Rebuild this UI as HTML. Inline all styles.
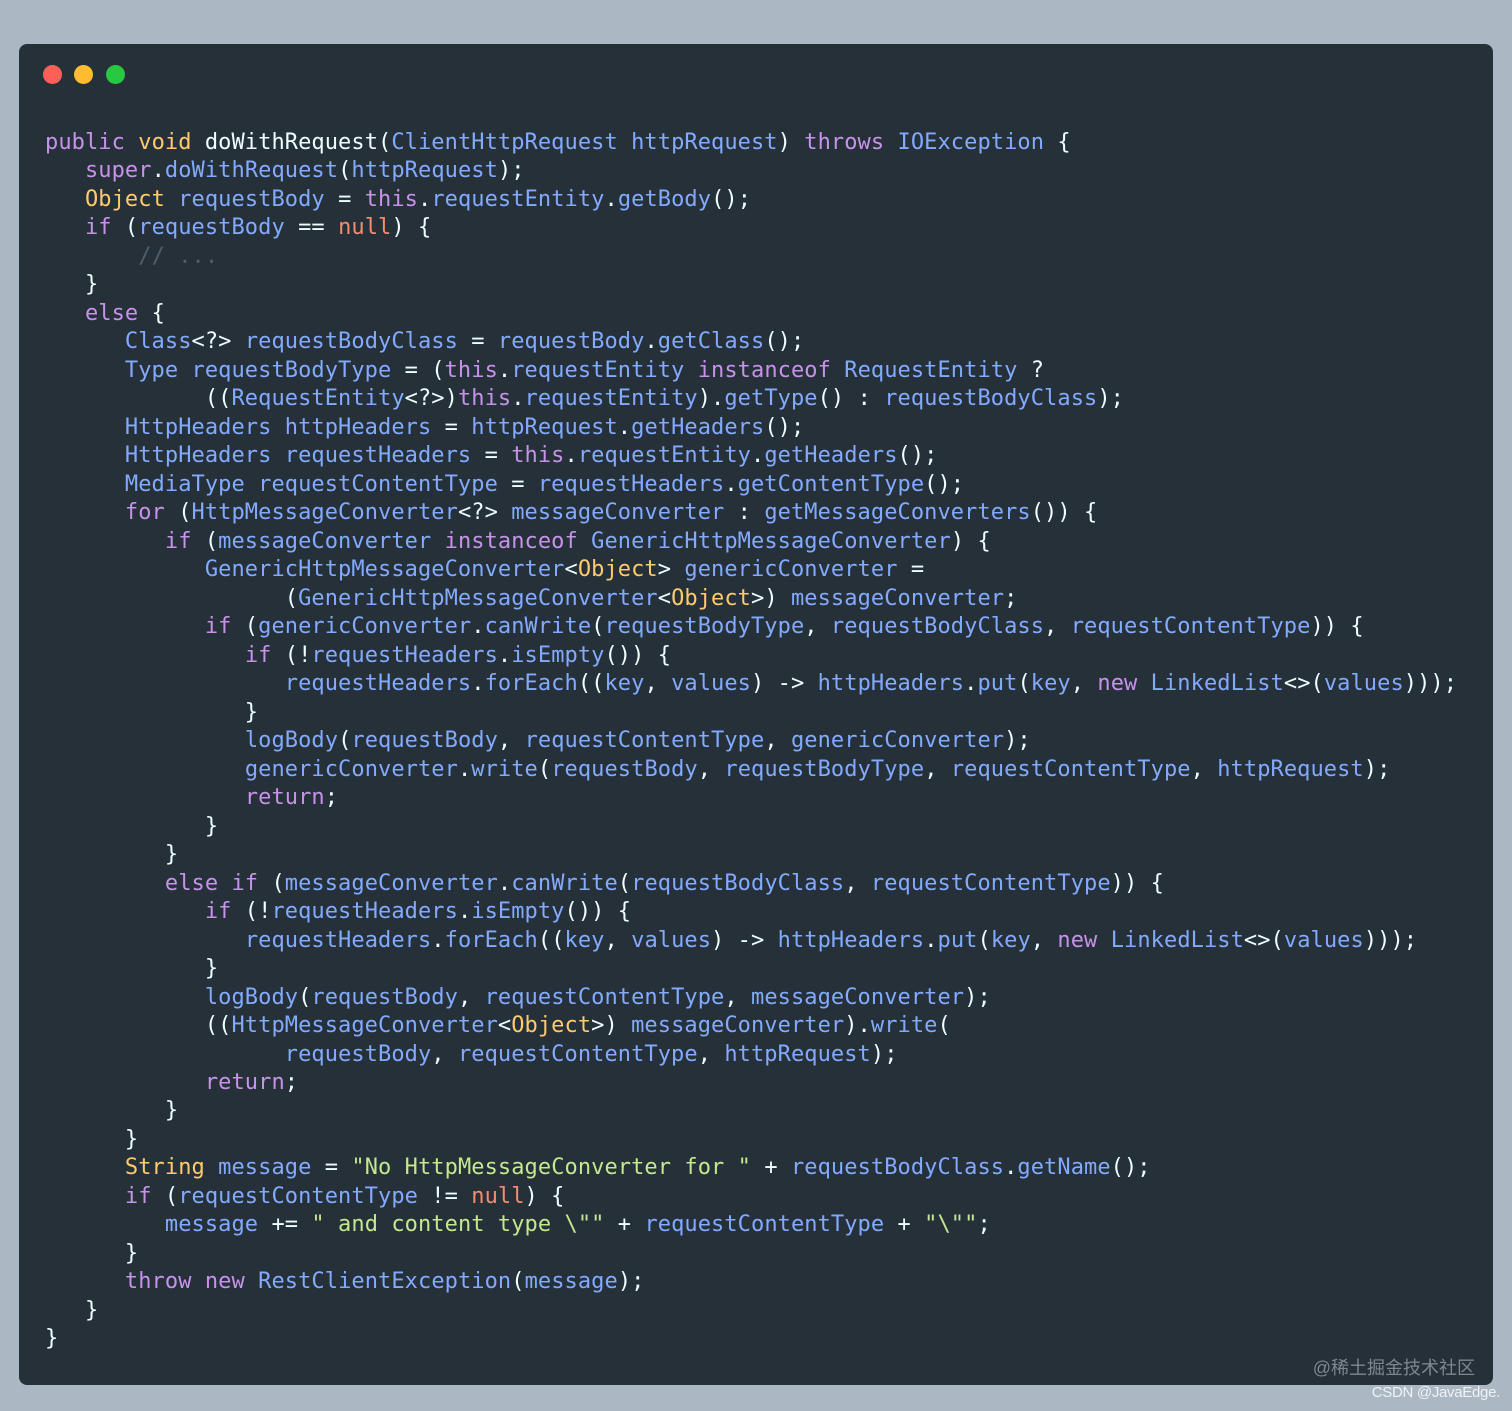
<!DOCTYPE html>
<html><head><meta charset="utf-8"><style>
html,body{margin:0;padding:0;}
body{width:1512px;height:1411px;background:#abb8c3;position:relative;overflow:hidden;}
.win{position:absolute;left:19px;top:44px;width:1474px;height:1341px;background:#263039;border-radius:8px;}
.d{position:absolute;top:65px;width:19px;height:19px;border-radius:50%;}
pre{position:absolute;left:45px;top:129px;margin:0;font-family:"DejaVu Sans Mono","Liberation Mono",monospace;font-size:22px;line-height:28.48px;letter-spacing:0.075px;color:#eeffff;}
.k{color:#c792ea}.y{color:#ffcb6b}.b{color:#82aaff}.o{color:#f78c6c}.s{color:#c3e88d}.c{color:#4f5f6a}.w{color:#eeffff}
.wm{position:absolute;right:37px;top:1354px;font-family:"Liberation Sans","Noto Sans CJK SC",sans-serif;font-size:18px;color:#7d8790;}
.cs{position:absolute;right:12px;top:1384px;font-family:"Liberation Sans",sans-serif;font-size:15px;color:#eef2f5;letter-spacing:-0.3px;font-weight:300;}
</style></head><body>
<div class="win"></div>
<div class="d" style="left:43px;background:#fe5f57"></div>
<div class="d" style="left:74px;background:#febc2e"></div>
<div class="d" style="left:106px;background:#28c840"></div>
<pre><span class="k">public</span> <span class="y">void</span> doWithRequest(<span class="b">ClientHttpRequest httpRequest</span>) <span class="k">throws</span> <span class="b">IOException</span> {
   <span class="k">super</span>.<span class="b">doWithRequest</span>(<span class="b">httpRequest</span>);
   <span class="y">Object</span> <span class="b">requestBody</span> = <span class="k">this</span>.<span class="b">requestEntity</span>.<span class="b">getBody</span>();
   <span class="k">if</span> (<span class="b">requestBody</span> == <span class="o">null</span>) {
       <span class="c">// ...</span>
   }
   <span class="k">else</span> {
      <span class="b">Class</span>&lt;?&gt; <span class="b">requestBodyClass</span> = <span class="b">requestBody</span>.<span class="b">getClass</span>();
      <span class="b">Type requestBodyType</span> = (<span class="k">this</span>.<span class="b">requestEntity</span> <span class="k">instanceof</span> <span class="b">RequestEntity</span> ?
            ((<span class="b">RequestEntity</span>&lt;?&gt;)<span class="k">this</span>.<span class="b">requestEntity</span>).<span class="b">getType</span>() : <span class="b">requestBodyClass</span>);
      <span class="b">HttpHeaders httpHeaders</span> = <span class="b">httpRequest</span>.<span class="b">getHeaders</span>();
      <span class="b">HttpHeaders requestHeaders</span> = <span class="k">this</span>.<span class="b">requestEntity</span>.<span class="b">getHeaders</span>();
      <span class="b">MediaType requestContentType</span> = <span class="b">requestHeaders</span>.<span class="b">getContentType</span>();
      <span class="k">for</span> (<span class="b">HttpMessageConverter</span>&lt;?&gt; <span class="b">messageConverter</span> : <span class="b">getMessageConverters</span>()) {
         <span class="k">if</span> (<span class="b">messageConverter</span> <span class="k">instanceof</span> <span class="b">GenericHttpMessageConverter</span>) {
            <span class="b">GenericHttpMessageConverter</span>&lt;<span class="y">Object</span>&gt; <span class="b">genericConverter</span> =
                  (<span class="b">GenericHttpMessageConverter</span>&lt;<span class="y">Object</span>&gt;) <span class="b">messageConverter</span>;
            <span class="k">if</span> (<span class="b">genericConverter</span>.<span class="b">canWrite</span>(<span class="b">requestBodyType</span>, <span class="b">requestBodyClass</span>, <span class="b">requestContentType</span>)) {
               <span class="k">if</span> (!<span class="b">requestHeaders</span>.<span class="b">isEmpty</span>()) {
                  <span class="b">requestHeaders</span>.<span class="b">forEach</span>((<span class="b">key</span>, <span class="b">values</span>) -&gt; <span class="b">httpHeaders</span>.<span class="b">put</span>(<span class="b">key</span>, <span class="k">new</span> <span class="b">LinkedList</span>&lt;&gt;(<span class="b">values</span>)));
               }
               <span class="b">logBody</span>(<span class="b">requestBody</span>, <span class="b">requestContentType</span>, <span class="b">genericConverter</span>);
               <span class="b">genericConverter</span>.<span class="b">write</span>(<span class="b">requestBody</span>, <span class="b">requestBodyType</span>, <span class="b">requestContentType</span>, <span class="b">httpRequest</span>);
               <span class="k">return</span>;
            }
         }
         <span class="k">else if</span> (<span class="b">messageConverter</span>.<span class="b">canWrite</span>(<span class="b">requestBodyClass</span>, <span class="b">requestContentType</span>)) {
            <span class="k">if</span> (!<span class="b">requestHeaders</span>.<span class="b">isEmpty</span>()) {
               <span class="b">requestHeaders</span>.<span class="b">forEach</span>((<span class="b">key</span>, <span class="b">values</span>) -&gt; <span class="b">httpHeaders</span>.<span class="b">put</span>(<span class="b">key</span>, <span class="k">new</span> <span class="b">LinkedList</span>&lt;&gt;(<span class="b">values</span>)));
            }
            <span class="b">logBody</span>(<span class="b">requestBody</span>, <span class="b">requestContentType</span>, <span class="b">messageConverter</span>);
            ((<span class="b">HttpMessageConverter</span>&lt;<span class="y">Object</span>&gt;) <span class="b">messageConverter</span>).<span class="b">write</span>(
                  <span class="b">requestBody</span>, <span class="b">requestContentType</span>, <span class="b">httpRequest</span>);
            <span class="k">return</span>;
         }
      }
      <span class="y">String</span> <span class="b">message</span> = <span class="s">"No HttpMessageConverter for "</span> + <span class="b">requestBodyClass</span>.<span class="b">getName</span>();
      <span class="k">if</span> (<span class="b">requestContentType</span> != <span class="o">null</span>) {
         <span class="b">message</span> += <span class="s">" and content type \""</span> + <span class="b">requestContentType</span> + <span class="s">"\""</span>;
      }
      <span class="k">throw</span> <span class="k">new</span> <span class="b">RestClientException</span>(<span class="b">message</span>);
   }
}</pre>
<div class="wm">@稀土掘金技术社区</div>
<div class="cs">CSDN @JavaEdge.</div>
</body></html>
